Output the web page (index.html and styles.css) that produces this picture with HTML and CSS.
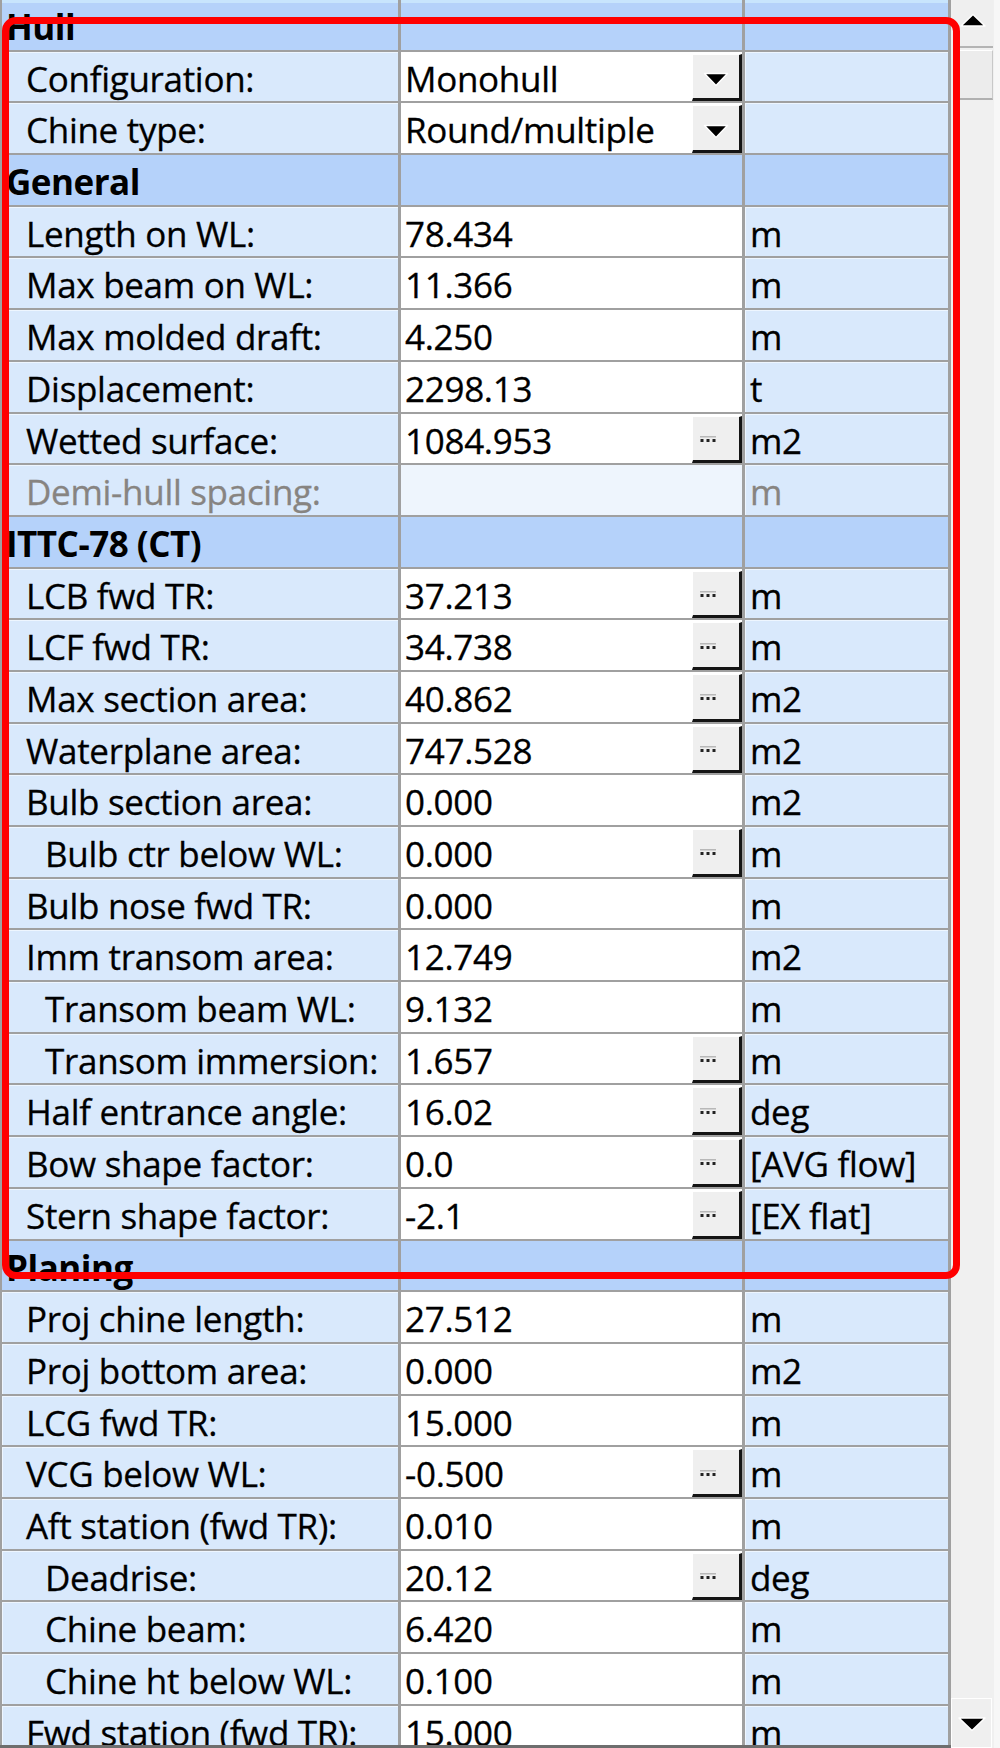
FILE: index.html
```html
<!DOCTYPE html>
<html>
<head>
<meta charset="utf-8">
<link rel="stylesheet" href="styles.css">
</head>
<body>
<div class="window">
  <div class="grid">
    <div class="row head top"><div class="c lab">Hull</div><div class="c val"></div><div class="c unit"></div></div>
    <div class="row"><div class="c lab">Configuration:</div><div class="c val"><span class="txt">Monohull</span><span class="btn drop"><svg width="26" height="15" viewBox="0 0 26 15"><polygon points="1.5,1.5 24.5,1.5 13,13.5" fill="#000" stroke="#fff" stroke-width="1.5" stroke-linejoin="round"/></svg></span></div><div class="c unit"></div></div>
    <div class="row"><div class="c lab">Chine type:</div><div class="c val"><span class="txt">Round/multiple</span><span class="btn drop"><svg width="26" height="15" viewBox="0 0 26 15"><polygon points="1.5,1.5 24.5,1.5 13,13.5" fill="#000" stroke="#fff" stroke-width="1.5" stroke-linejoin="round"/></svg></span></div><div class="c unit"></div></div>
    <div class="row head"><div class="c lab">General</div><div class="c val"></div><div class="c unit"></div></div>
    <div class="row"><div class="c lab">Length on WL:</div><div class="c val"><span class="txt">78.434</span></div><div class="c unit">m</div></div>
    <div class="row"><div class="c lab">Max beam on WL:</div><div class="c val"><span class="txt">11.366</span></div><div class="c unit">m</div></div>
    <div class="row"><div class="c lab">Max molded draft:</div><div class="c val"><span class="txt">4.250</span></div><div class="c unit">m</div></div>
    <div class="row"><div class="c lab">Displacement:</div><div class="c val"><span class="txt">2298.13</span></div><div class="c unit">t</div></div>
    <div class="row"><div class="c lab">Wetted surface:</div><div class="c val"><span class="txt">1084.953</span><span class="btn ell"><svg width="16" height="8" viewBox="0 0 16 8"><rect x="0" y="0" width="16" height="1.5" fill="#b8b8b8"/><rect x="0.5" y="3" width="3" height="3" fill="#222"/><rect x="6.5" y="3" width="3" height="3" fill="#222"/><rect x="12.5" y="3" width="3" height="3" fill="#222"/></svg></span></div><div class="c unit">m2</div></div>
    <div class="row dis"><div class="c lab">Demi-hull spacing:</div><div class="c val"><span class="txt"></span></div><div class="c unit">m</div></div>
    <div class="row head"><div class="c lab">ITTC-78 (CT)</div><div class="c val"></div><div class="c unit"></div></div>
    <div class="row"><div class="c lab">LCB fwd TR:</div><div class="c val"><span class="txt">37.213</span><span class="btn ell"><svg width="16" height="8" viewBox="0 0 16 8"><rect x="0" y="0" width="16" height="1.5" fill="#b8b8b8"/><rect x="0.5" y="3" width="3" height="3" fill="#222"/><rect x="6.5" y="3" width="3" height="3" fill="#222"/><rect x="12.5" y="3" width="3" height="3" fill="#222"/></svg></span></div><div class="c unit">m</div></div>
    <div class="row"><div class="c lab">LCF fwd TR:</div><div class="c val"><span class="txt">34.738</span><span class="btn ell"><svg width="16" height="8" viewBox="0 0 16 8"><rect x="0" y="0" width="16" height="1.5" fill="#b8b8b8"/><rect x="0.5" y="3" width="3" height="3" fill="#222"/><rect x="6.5" y="3" width="3" height="3" fill="#222"/><rect x="12.5" y="3" width="3" height="3" fill="#222"/></svg></span></div><div class="c unit">m</div></div>
    <div class="row"><div class="c lab">Max section area:</div><div class="c val"><span class="txt">40.862</span><span class="btn ell"><svg width="16" height="8" viewBox="0 0 16 8"><rect x="0" y="0" width="16" height="1.5" fill="#b8b8b8"/><rect x="0.5" y="3" width="3" height="3" fill="#222"/><rect x="6.5" y="3" width="3" height="3" fill="#222"/><rect x="12.5" y="3" width="3" height="3" fill="#222"/></svg></span></div><div class="c unit">m2</div></div>
    <div class="row"><div class="c lab">Waterplane area:</div><div class="c val"><span class="txt">747.528</span><span class="btn ell"><svg width="16" height="8" viewBox="0 0 16 8"><rect x="0" y="0" width="16" height="1.5" fill="#b8b8b8"/><rect x="0.5" y="3" width="3" height="3" fill="#222"/><rect x="6.5" y="3" width="3" height="3" fill="#222"/><rect x="12.5" y="3" width="3" height="3" fill="#222"/></svg></span></div><div class="c unit">m2</div></div>
    <div class="row"><div class="c lab">Bulb section area:</div><div class="c val"><span class="txt">0.000</span></div><div class="c unit">m2</div></div>
    <div class="row"><div class="c lab ind">Bulb ctr below WL:</div><div class="c val"><span class="txt">0.000</span><span class="btn ell"><svg width="16" height="8" viewBox="0 0 16 8"><rect x="0" y="0" width="16" height="1.5" fill="#b8b8b8"/><rect x="0.5" y="3" width="3" height="3" fill="#222"/><rect x="6.5" y="3" width="3" height="3" fill="#222"/><rect x="12.5" y="3" width="3" height="3" fill="#222"/></svg></span></div><div class="c unit">m</div></div>
    <div class="row"><div class="c lab">Bulb nose fwd TR:</div><div class="c val"><span class="txt">0.000</span></div><div class="c unit">m</div></div>
    <div class="row"><div class="c lab">Imm transom area:</div><div class="c val"><span class="txt">12.749</span></div><div class="c unit">m2</div></div>
    <div class="row"><div class="c lab ind">Transom beam WL:</div><div class="c val"><span class="txt">9.132</span></div><div class="c unit">m</div></div>
    <div class="row"><div class="c lab ind">Transom immersion:</div><div class="c val"><span class="txt">1.657</span><span class="btn ell"><svg width="16" height="8" viewBox="0 0 16 8"><rect x="0" y="0" width="16" height="1.5" fill="#b8b8b8"/><rect x="0.5" y="3" width="3" height="3" fill="#222"/><rect x="6.5" y="3" width="3" height="3" fill="#222"/><rect x="12.5" y="3" width="3" height="3" fill="#222"/></svg></span></div><div class="c unit">m</div></div>
    <div class="row"><div class="c lab">Half entrance angle:</div><div class="c val"><span class="txt">16.02</span><span class="btn ell"><svg width="16" height="8" viewBox="0 0 16 8"><rect x="0" y="0" width="16" height="1.5" fill="#b8b8b8"/><rect x="0.5" y="3" width="3" height="3" fill="#222"/><rect x="6.5" y="3" width="3" height="3" fill="#222"/><rect x="12.5" y="3" width="3" height="3" fill="#222"/></svg></span></div><div class="c unit">deg</div></div>
    <div class="row"><div class="c lab">Bow shape factor:</div><div class="c val"><span class="txt">0.0</span><span class="btn ell"><svg width="16" height="8" viewBox="0 0 16 8"><rect x="0" y="0" width="16" height="1.5" fill="#b8b8b8"/><rect x="0.5" y="3" width="3" height="3" fill="#222"/><rect x="6.5" y="3" width="3" height="3" fill="#222"/><rect x="12.5" y="3" width="3" height="3" fill="#222"/></svg></span></div><div class="c unit">[AVG flow]</div></div>
    <div class="row"><div class="c lab">Stern shape factor:</div><div class="c val"><span class="txt">-2.1</span><span class="btn ell"><svg width="16" height="8" viewBox="0 0 16 8"><rect x="0" y="0" width="16" height="1.5" fill="#b8b8b8"/><rect x="0.5" y="3" width="3" height="3" fill="#222"/><rect x="6.5" y="3" width="3" height="3" fill="#222"/><rect x="12.5" y="3" width="3" height="3" fill="#222"/></svg></span></div><div class="c unit">[EX flat]</div></div>
    <div class="row head"><div class="c lab">Planing</div><div class="c val"></div><div class="c unit"></div></div>
    <div class="row"><div class="c lab">Proj chine length:</div><div class="c val"><span class="txt">27.512</span></div><div class="c unit">m</div></div>
    <div class="row"><div class="c lab">Proj bottom area:</div><div class="c val"><span class="txt">0.000</span></div><div class="c unit">m2</div></div>
    <div class="row"><div class="c lab">LCG fwd TR:</div><div class="c val"><span class="txt">15.000</span></div><div class="c unit">m</div></div>
    <div class="row"><div class="c lab">VCG below WL:</div><div class="c val"><span class="txt">-0.500</span><span class="btn ell"><svg width="16" height="8" viewBox="0 0 16 8"><rect x="0" y="0" width="16" height="1.5" fill="#b8b8b8"/><rect x="0.5" y="3" width="3" height="3" fill="#222"/><rect x="6.5" y="3" width="3" height="3" fill="#222"/><rect x="12.5" y="3" width="3" height="3" fill="#222"/></svg></span></div><div class="c unit">m</div></div>
    <div class="row"><div class="c lab">Aft station (fwd TR):</div><div class="c val"><span class="txt">0.010</span></div><div class="c unit">m</div></div>
    <div class="row"><div class="c lab ind">Deadrise:</div><div class="c val"><span class="txt">20.12</span><span class="btn ell"><svg width="16" height="8" viewBox="0 0 16 8"><rect x="0" y="0" width="16" height="1.5" fill="#b8b8b8"/><rect x="0.5" y="3" width="3" height="3" fill="#222"/><rect x="6.5" y="3" width="3" height="3" fill="#222"/><rect x="12.5" y="3" width="3" height="3" fill="#222"/></svg></span></div><div class="c unit">deg</div></div>
    <div class="row"><div class="c lab ind">Chine beam:</div><div class="c val"><span class="txt">6.420</span></div><div class="c unit">m</div></div>
    <div class="row"><div class="c lab ind">Chine ht below WL:</div><div class="c val"><span class="txt">0.100</span></div><div class="c unit">m</div></div>
    <div class="row"><div class="c lab">Fwd station (fwd TR):</div><div class="c val"><span class="txt">15.000</span></div><div class="c unit">m</div></div>
  </div>
  <div class="scroll">
    <div class="sb-btn up"><svg width="28" height="15" viewBox="0 0 28 15"><polygon points="2,13 26,13 14,1.5" fill="#000" stroke="#fff" stroke-width="1.5" stroke-linejoin="round"/></svg></div>
    <div class="thumb"></div>
    <div class="sb-btn down"><svg width="30" height="16" viewBox="0 0 30 16"><polygon points="2,2 28,2 15,14.5" fill="#000" stroke="#fff" stroke-width="1.5" stroke-linejoin="round"/></svg></div>
  </div>
  <div class="mark"></div>
</div>
</body>
</html>
```
FILE: styles.css
```css
html, body {
  margin: 0;
  padding: 0;
  background: #ffffff;
}

.window {
  position: relative;
  display: flex;
  width: 1000px;
  height: 1748px;
  overflow: hidden;
  font-family: "Open Sans", "Noto Sans", sans-serif;
  font-size: 35px;
  letter-spacing: -0.3px;
  -webkit-text-stroke: 0.3px #000;
  color: #000;
}

.grid {
  position: relative;
  flex: none;
  width: 951px;
  box-sizing: border-box;
  border-left: 2px solid #a0a0a0;
  border-right: 3px solid #a0a0a0;
}

.grid::after {
  content: "";
  position: absolute;
  left: -2px;
  right: -3px;
  bottom: 0;
  height: 3px;
  background: #6e6e6e;
}

.row {
  display: grid;
  grid-template-columns: 399px 344px 1fr;
  height: 51.7px;
  box-sizing: border-box;
  border-bottom: 2px solid #a0a0a0;
}

.c {
  box-sizing: border-box;
  border-right: 3px solid #a0a0a0;
  background: #d9e9fc;
  box-shadow: inset 1px 1px 0 #eef6ff;
  line-height: 46px;
  padding-top: 4px;
  white-space: nowrap;
  overflow: hidden;
}

.lab {
  padding-left: 24px;
}

.lab.ind {
  padding-left: 43px;
}

.unit {
  border-right: 0;
  padding-left: 5px;
}

.val {
  display: flex;
  align-items: stretch;
  background: #ffffff;
  padding-top: 0;
  box-shadow: none;
}

.txt {
  flex: 1;
  padding-left: 4px;
  padding-top: 4px;
  line-height: 46px;
  overflow: hidden;
}

.head .c {
  background: #b5d2fa;
  box-shadow: none;
}

.head .lab {
  font-weight: 700;
  padding-left: 4px;
  letter-spacing: -0.5px;
  -webkit-text-stroke: 0;
}

.top .c {
  box-shadow: inset 0 3px 0 #c8e5fd;
}

.dis .lab,
.dis .unit {
  color: #878481;
  -webkit-text-stroke: 0.3px #878481;
}

.dis .val {
  background: #eef5fd;
}

.btn {
  flex: none;
  width: 50px;
  margin-top: 2px;
  box-sizing: border-box;
  background: #efefef;
  border-top: 1px solid #ffffff;
  border-left: 1px solid #ffffff;
  border-right: 3px solid #141414;
  border-bottom: 3px solid #141414;
  display: flex;
  align-items: center;
  -webkit-text-stroke: 0;
}

.btn.drop {
  justify-content: center;
}

.btn.drop svg {
  margin-top: 6px;
}

.btn.ell {
  justify-content: flex-start;
  padding-left: 7px;
}

.btn.ell svg {
  margin-top: 3px;
}

.scroll {
  flex: 1;
  display: flex;
  flex-direction: column;
  background: #f0f0f0;
  box-shadow: inset -6px 0 0 #f7f7f7;
}

.sb-btn {
  box-sizing: border-box;
  height: 48px;
  margin: 0 7px 0 2px;
  background: #efefef;
  display: flex;
  justify-content: center;
}

.sb-btn.up {
  align-items: flex-start;
  padding-top: 13px;
  border-bottom: 2px solid #b4b4b4;
}

.sb-btn.down {
  margin-top: auto;
  height: 50px;
  align-items: flex-start;
  padding-top: 17px;
  border: 1px solid #ffffff;
  margin-left: 0;
  margin-right: 8px;
}

.thumb {
  box-sizing: border-box;
  height: 50px;
  margin: 2px 7px 0 2px;
  background: #ececec;
  border-top: 1px solid #ffffff;
  border-left: 1px solid #ffffff;
  border-right: 1px solid #c8c8c8;
  border-bottom: 2px solid #b0b0b0;
}

.mark {
  position: absolute;
  left: 2px;
  top: 17px;
  width: 958px;
  height: 1262px;
  box-sizing: border-box;
  border: 7px solid #ff0000;
  border-radius: 14px;
  pointer-events: none;
}
```
